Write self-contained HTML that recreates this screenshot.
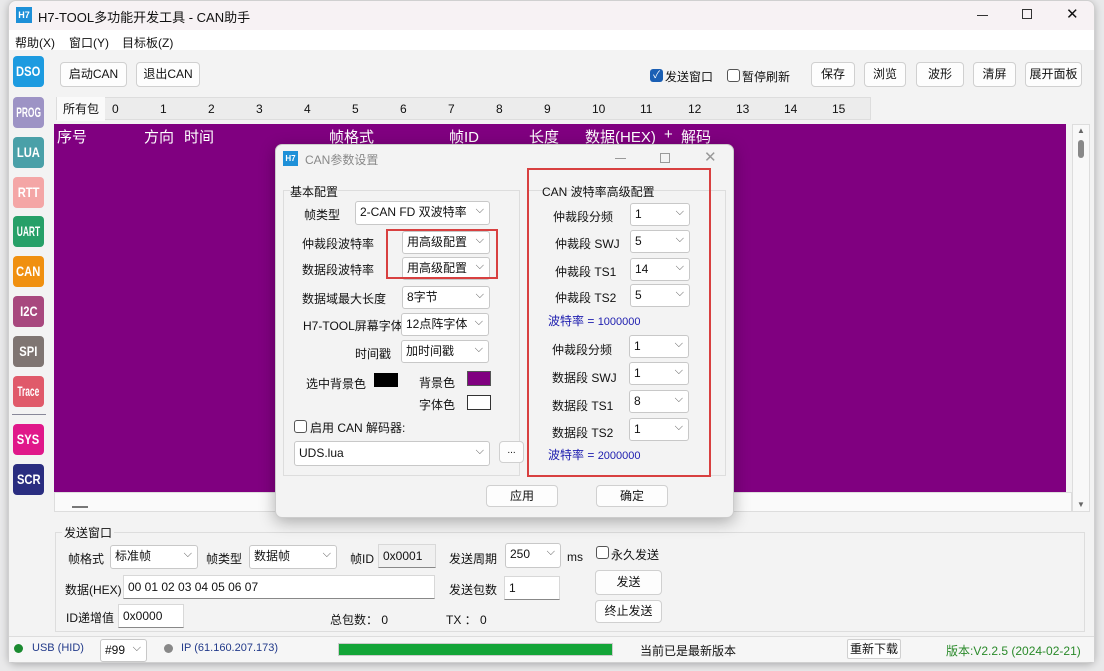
<!DOCTYPE html>
<html><head><meta charset="utf-8"><style>
*{box-sizing:border-box;margin:0;padding:0}
body{width:1104px;height:671px;background:#e9e9ea;position:relative;overflow:hidden;font-family:"Liberation Sans","Noto Sans CJK SC",sans-serif;font-size:12px;color:#111}
.a{position:absolute}
.win{left:8px;top:0;width:1087px;height:663px;background:#f3f3f3;border:1px solid #d0d0d0;border-radius:8px;box-shadow:0 2px 8px rgba(0,0,0,.25);overflow:hidden}
.btn{position:absolute;background:#fdfdfd;border:1px solid #d0d0d0;border-radius:4px;text-align:center;font-size:12px}
.ic{position:absolute;left:13px;width:31px;height:31px;border-radius:4px;color:#fff;font-weight:bold;font-size:14px;text-align:center;line-height:31px;overflow:hidden;white-space:nowrap}
.ic span{display:inline-block;transform:scaleX(.8)}
.ic span.n{transform:scaleX(.6);margin:0 -10px}
.sel{position:absolute;background:#fff;border:1px solid #c8c8c8;border-radius:3px;font-size:12px;padding-left:4px;line-height:20px;height:22px}
.sel:after{content:"⌵";position:absolute;right:5px;top:-2px;color:#555;font-size:11px}
.inp{position:absolute;background:#fff;border:1px solid #d8d8d8;border-bottom:1px solid #888;font-size:12px;padding-left:4px;line-height:22px;height:24px}
.lb{position:absolute;font-size:12px;white-space:nowrap}
.hd{position:absolute;top:126px;color:#fff;font-size:15px;white-space:nowrap}
.cb{position:absolute;width:13px;height:13px;border:1px solid #555;border-radius:3px;background:#fff}
</style></head><body>
<div class="a win"></div>
<div class="a" style="left:9px;top:1px;width:1085px;height:29px;background:#f7f2f4;border-radius:8px 8px 0 0"></div>
<div class="a" style="left:16px;top:7px;width:16px;height:16px;background:#1e90d8;color:#fff;font-size:9px;font-weight:bold;line-height:16px;text-align:center">H7</div>
<div class="lb" style="left:38px;top:7px;font-size:13px">H7-TOOL多功能开发工具 - CAN助手</div>
<div class="a" style="left:977px;top:15px;width:11px;height:1px;background:#333"></div>
<div class="a" style="left:1022px;top:9px;width:10px;height:10px;border:1px solid #333"></div>
<div class="lb" style="left:1066px;top:5px;font-size:15px">✕</div>
<div class="a" style="left:9px;top:30px;width:1085px;height:20px;background:#fff"></div>
<div class="lb" style="left:15px;top:34px">帮助(X)</div>
<div class="lb" style="left:69px;top:34px">窗口(Y)</div>
<div class="lb" style="left:122px;top:34px">目标板(Z)</div>
<div class="ic" style="top:56px;background:#1d9be0"><span>DSO</span></div>
<div class="ic" style="top:97px;background:#9d93c5"><span class="n">PROG</span></div>
<div class="ic" style="top:137px;background:#4aa0a8"><span>LUA</span></div>
<div class="ic" style="top:177px;background:#f4a6a6"><span>RTT</span></div>
<div class="ic" style="top:216px;background:#27a068"><span class="n">UART</span></div>
<div class="ic" style="top:256px;background:#f09010"><span>CAN</span></div>
<div class="ic" style="top:296px;background:#a8487e"><span>I2C</span></div>
<div class="ic" style="top:336px;background:#7f7572"><span>SPI</span></div>
<div class="ic" style="top:376px;background:#e05a6a"><span class="n">Trace</span></div>
<div class="a" style="left:12px;top:414px;width:34px;height:1px;background:#889"></div>
<div class="ic" style="top:424px;background:#e0188a"><span>SYS</span></div>
<div class="ic" style="top:464px;background:#2a2d80"><span>SCR</span></div>
<div class="btn" style="left:60px;top:62px;width:67px;height:25px;line-height:23px">启动CAN</div>
<div class="btn" style="left:136px;top:62px;width:64px;height:25px;line-height:23px">退出CAN</div>
<div class="a" style="left:650px;top:69px;width:13px;height:13px;background:#1a5fb4;border-radius:3px;color:#fff;font-size:10px;line-height:13px;text-align:center">✓</div>
<div class="lb" style="left:665px;top:68px">发送窗口</div>
<div class="cb" style="left:727px;top:69px"></div>
<div class="lb" style="left:742px;top:68px">暂停刷新</div>
<div class="btn" style="left:811px;top:62px;width:44px;height:25px;line-height:23px">保存</div>
<div class="btn" style="left:864px;top:62px;width:42px;height:25px;line-height:23px">浏览</div>
<div class="btn" style="left:916px;top:62px;width:48px;height:25px;line-height:23px">波形</div>
<div class="btn" style="left:973px;top:62px;width:43px;height:25px;line-height:23px">清屏</div>
<div class="btn" style="left:1025px;top:62px;width:57px;height:25px;line-height:23px">展开面板</div>
<div class="a" style="left:56px;top:97px;width:815px;height:23px;background:#ececec;border:1px solid #ddd"></div>
<div class="a" style="left:57px;top:97px;width:48px;height:24px;background:#fafafa"></div>
<div class="lb" style="left:63px;top:100px">所有包</div>
<div class="lb" style="left:112px;top:102px">0</div><div class="lb" style="left:160px;top:102px">1</div><div class="lb" style="left:208px;top:102px">2</div><div class="lb" style="left:256px;top:102px">3</div><div class="lb" style="left:304px;top:102px">4</div><div class="lb" style="left:352px;top:102px">5</div><div class="lb" style="left:400px;top:102px">6</div><div class="lb" style="left:448px;top:102px">7</div><div class="lb" style="left:496px;top:102px">8</div><div class="lb" style="left:544px;top:102px">9</div><div class="lb" style="left:592px;top:102px">10</div><div class="lb" style="left:640px;top:102px">11</div><div class="lb" style="left:688px;top:102px">12</div><div class="lb" style="left:736px;top:102px">13</div><div class="lb" style="left:784px;top:102px">14</div><div class="lb" style="left:832px;top:102px">15</div>
<div class="a" style="left:54px;top:124px;width:1012px;height:368px;background:#800080"></div>
<div class="hd" style="left:57px">序号</div>
<div class="hd" style="left:144px">方向</div>
<div class="hd" style="left:184px">时间</div>
<div class="hd" style="left:329px">帧格式</div>
<div class="hd" style="left:449px">帧ID</div>
<div class="hd" style="left:529px">长度</div>
<div class="hd" style="left:585px">数据(HEX)</div>
<div class="hd" style="left:664px">+</div>
<div class="hd" style="left:681px">解码</div>
<div class="a" style="left:1072px;top:124px;width:18px;height:388px;background:#f8f8f8;border:1px solid #ddd"></div>
<div class="a" style="left:1078px;top:140px;width:6px;height:18px;background:#888;border-radius:3px"></div>
<div class="lb" style="left:1077px;top:126px;font-size:8px;color:#666">▲</div>
<div class="lb" style="left:1077px;top:500px;font-size:8px;color:#666">▼</div>
<div class="a" style="left:54px;top:492px;width:1018px;height:20px;background:#fafafa;border:1px solid #ddd"></div>
<div class="a" style="left:72px;top:506px;width:16px;height:2px;background:#777"></div>
<div class="a" style="left:55px;top:532px;width:1030px;height:100px;border:1px solid #ddd"></div>
<div class="lb" style="left:62px;top:524px;background:#f3f3f3;padding:0 2px">发送窗口</div>
<div class="lb" style="left:68px;top:550px">帧格式</div>
<div class="sel" style="left:110px;top:545px;width:88px;height:24px">标准帧</div>
<div class="lb" style="left:206px;top:550px">帧类型</div>
<div class="sel" style="left:249px;top:545px;width:88px;height:24px">数据帧</div>
<div class="lb" style="left:350px;top:550px">帧ID</div>
<div class="inp" style="left:378px;top:544px;width:58px;background:#f0f0f0">0x0001</div>
<div class="lb" style="left:449px;top:550px">发送周期</div>
<div class="sel" style="left:505px;top:543px;width:56px;height:25px">250</div>
<div class="lb" style="left:567px;top:550px">ms</div>
<div class="cb" style="left:596px;top:546px"></div>
<div class="lb" style="left:611px;top:546px">永久发送</div>
<div class="lb" style="left:65px;top:581px">数据(HEX)</div>
<div class="inp" style="left:123px;top:575px;width:312px">00 01 02 03 04 05 06 07</div>
<div class="lb" style="left:449px;top:581px">发送包数</div>
<div class="inp" style="left:504px;top:576px;width:56px">1</div>
<div class="btn" style="left:595px;top:570px;width:67px;height:25px;line-height:23px">发送</div>
<div class="btn" style="left:595px;top:600px;width:67px;height:23px;line-height:21px">终止发送</div>
<div class="lb" style="left:66px;top:609px">ID递增值</div>
<div class="inp" style="left:118px;top:604px;width:66px">0x0000</div>
<div class="lb" style="left:330px;top:611px">总包数： 0</div>
<div class="lb" style="left:446px;top:611px">TX ： 0</div>
<div class="a" style="left:9px;top:636px;width:1085px;height:26px;background:#f6f6f6;border-top:1px solid #ddd"></div>
<div class="a" style="left:14px;top:644px;width:9px;height:9px;border-radius:50%;background:#1a8a30"></div>
<div class="lb" style="left:32px;top:642px;color:#223a8a;font-size:11px">USB (HID)</div>
<div class="sel" style="left:100px;top:639px;width:47px;height:23px">#99</div>
<div class="a" style="left:164px;top:644px;width:9px;height:9px;border-radius:50%;background:#888"></div>
<div class="lb" style="left:181px;top:642px;color:#223a8a;font-size:11px">IP (61.160.207.173)</div>
<div class="a" style="left:338px;top:643px;width:275px;height:13px;background:#13a538;border:1px solid #ccc"></div>
<div class="lb" style="left:640px;top:642px">当前已是最新版本</div>
<div class="btn" style="left:847px;top:639px;width:54px;height:20px;line-height:18px;border-radius:2px">重新下载</div>
<div class="lb" style="left:946px;top:642px;color:#2a8a2a;font-size:12px">版本:V2.2.5 (2024-02-21)</div>
<div class="a" style="left:275px;top:144px;width:459px;height:374px;background:#f3f3f3;border:1px solid #ccc;border-radius:7px;box-shadow:0 4px 16px rgba(0,0,0,.3)"></div>
<div class="a" style="left:283px;top:151px;width:15px;height:15px;background:#1e90d8;color:#fff;font-size:8px;font-weight:bold;line-height:15px;text-align:center">H7</div>
<div class="lb" style="left:305px;top:151px;color:#888">CAN参数设置</div>
<div class="a" style="left:615px;top:158px;width:11px;height:1px;background:#999"></div>
<div class="a" style="left:660px;top:153px;width:10px;height:10px;border:1px solid #999"></div>
<div class="lb" style="left:704px;top:148px;font-size:15px;color:#999">✕</div>
<div class="a" style="left:283px;top:190px;width:237px;height:286px;border:1px solid #ddd"></div>
<div class="lb" style="left:290px;top:183px;background:#f3f3f3">基本配置</div>
<div class="lb" style="left:304px;top:206px">帧类型</div>
<div class="sel" style="left:355px;top:201px;width:135px;height:24px">2-CAN FD 双波特率</div>
<div class="lb" style="left:302px;top:235px">仲裁段波特率</div>
<div class="sel" style="left:402px;top:231px;width:88px;height:23px">用高级配置</div>
<div class="lb" style="left:302px;top:261px">数据段波特率</div>
<div class="sel" style="left:402px;top:257px;width:88px;height:23px">用高级配置</div>
<div class="a" style="left:386px;top:229px;width:112px;height:50px;border:2px solid #d84040"></div>
<div class="lb" style="left:302px;top:290px">数据域最大长度</div>
<div class="sel" style="left:402px;top:286px;width:88px;height:23px">8字节</div>
<div class="lb" style="left:303px;top:317px;width:98px;overflow:hidden">H7-TOOL屏幕字体</div>
<div class="sel" style="left:401px;top:313px;width:88px;height:23px">12点阵字体</div>
<div class="lb" style="left:355px;top:345px">时间戳</div>
<div class="sel" style="left:401px;top:340px;width:88px;height:23px">加时间戳</div>
<div class="lb" style="left:306px;top:375px">选中背景色</div>
<div class="a" style="left:374px;top:373px;width:24px;height:14px;background:#000"></div>
<div class="lb" style="left:419px;top:374px">背景色</div>
<div class="a" style="left:467px;top:371px;width:24px;height:15px;background:#800080;border:1px solid #555"></div>
<div class="lb" style="left:419px;top:396px">字体色</div>
<div class="a" style="left:467px;top:395px;width:24px;height:15px;background:#fff;border:1px solid #333"></div>
<div class="cb" style="left:294px;top:420px"></div>
<div class="lb" style="left:310px;top:419px">启用 CAN 解码器:</div>
<div class="sel" style="left:294px;top:441px;width:196px;height:25px;line-height:23px">UDS.lua</div>
<div class="btn" style="left:499px;top:441px;width:25px;height:22px;line-height:18px;font-size:10px">...</div>
<div class="a" style="left:528px;top:190px;width:198px;height:286px;border:1px solid #ddd"></div>
<div class="a" style="left:527px;top:168px;width:184px;height:309px;border:2px solid #d84040"></div>
<div class="lb" style="left:542px;top:183px">CAN 波特率高级配置</div>
<div class="lb" style="left:553px;top:208px">仲裁段分频</div><div class="sel" style="left:630px;top:203px;width:60px;height:23px">1</div>
<div class="lb" style="left:555px;top:235px">仲裁段 SWJ</div><div class="sel" style="left:630px;top:230px;width:60px;height:23px">5</div>
<div class="lb" style="left:555px;top:263px">仲裁段 TS1</div><div class="sel" style="left:630px;top:258px;width:60px;height:23px">14</div>
<div class="lb" style="left:555px;top:289px">仲裁段 TS2</div><div class="sel" style="left:630px;top:284px;width:60px;height:23px">5</div>
<div class="lb" style="left:548px;top:312px;color:#2020b0">波特率 = <span style="font-size:11px">1000000</span></div>
<div class="lb" style="left:552px;top:341px">仲裁段分频</div><div class="sel" style="left:629px;top:335px;width:60px;height:23px">1</div>
<div class="lb" style="left:552px;top:369px">数据段 SWJ</div><div class="sel" style="left:629px;top:362px;width:60px;height:23px">1</div>
<div class="lb" style="left:552px;top:397px">数据段 TS1</div><div class="sel" style="left:629px;top:390px;width:60px;height:23px">8</div>
<div class="lb" style="left:552px;top:424px">数据段 TS2</div><div class="sel" style="left:629px;top:418px;width:60px;height:23px">1</div>
<div class="lb" style="left:548px;top:446px;color:#2020b0">波特率 = <span style="font-size:11px">2000000</span></div>
<div class="btn" style="left:486px;top:485px;width:72px;height:22px;line-height:20px">应用</div>
<div class="btn" style="left:596px;top:485px;width:72px;height:22px;line-height:20px">确定</div>
</body></html>
